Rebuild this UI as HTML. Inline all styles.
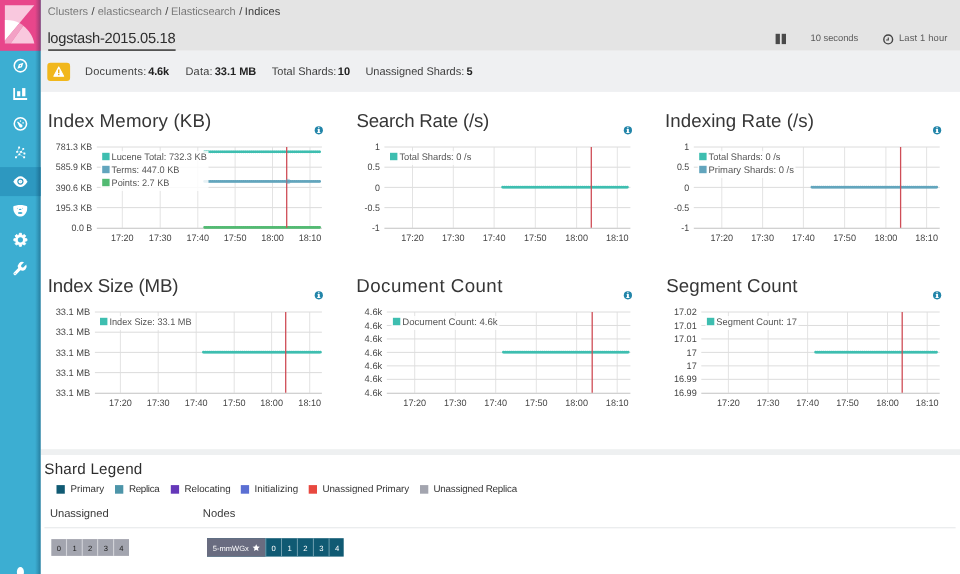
<!DOCTYPE html>
<html lang="en">
<head>
<meta charset="utf-8">
<title>Monitoring - Kibana</title>
<style>
html,body{margin:0;padding:0;}
body{text-rendering:geometricPrecision;width:960px;height:574px;overflow:hidden;background:#fff;position:relative;font-family:"Liberation Sans", sans-serif;color:#444;}
.abs{position:absolute;}
.t{position:absolute;white-space:nowrap;line-height:1.2;font-family:"Liberation Sans", sans-serif;}
#page{position:absolute;left:0;top:0;width:960px;height:574px;will-change:transform;}
#bg{position:absolute;left:0;top:0;}
.chart{position:absolute;overflow:visible;}
.chart text{font-family:"Liberation Sans", sans-serif;text-rendering:geometricPrecision;}
.ax{font-size:9.3px;fill:#454545;}
.lg{font-size:9.5px;fill:#555;}
#nav{position:absolute;left:0;top:0;width:41px;height:574px;}
.ub{position:absolute;top:539px;height:17px;width:15.2px;color:#222;font-size:7.6px;line-height:19.6px;text-align:center;}
.nb{position:absolute;top:538px;height:18px;width:15.9px;color:#fff;font-size:7.7px;line-height:22.8px;text-align:center;}
</style>
</head>
<body>
<div id="page">

<svg id="bg" width="960" height="574" viewBox="0 0 960 574">
<defs><linearGradient id="shade" x1="0" x2="1" y1="0" y2="0"><stop offset="0" stop-color="#002846" stop-opacity="0"/><stop offset="0.4" stop-color="#002846" stop-opacity="0.13"/><stop offset="1" stop-color="#002846" stop-opacity="0.36"/></linearGradient></defs>
<rect x="40.65" y="0" width="919.35" height="50.75" fill="#e4e4e4"/>
<rect x="40.65" y="50.75" width="919.35" height="41.15" fill="#eff0f2"/>
<rect x="40.65" y="449.2" width="919.35" height="5.8" fill="#eef0f1"/>
<rect x="0" y="0" width="40.65" height="574" fill="#3caed2"/>
<rect x="0" y="0" width="40.65" height="50.8" fill="#e8468b"/>
<rect x="0" y="167.1" width="40.65" height="29.0" fill="#2d98c0"/>
<rect x="48.2" y="49.35" width="127.4" height="1.45" fill="#303030"/>
<rect x="47.3" y="62.7" width="22.8" height="18.2" fill="#f1b71c" rx="3.2"/>
<path d="M58.75 66.95L63.65 76.2H53.85Z" fill="#fff" stroke="#fff" stroke-width="1.1" stroke-linejoin="round"/><rect x="58.05" y="69.5" width="1.4" height="3.7" fill="#e9ad17"/><rect x="58.05" y="73.9" width="1.4" height="1.3" fill="#e9ad17"/>
<rect x="44.4" y="527.2" width="911.2" height="1.1" fill="#e6e9ea"/>
<rect x="56.5" y="485.1" width="8.3" height="8.6" fill="#105a73"/>
<rect x="115.0" y="485.1" width="8.3" height="8.6" fill="#4d95a9"/>
<rect x="170.8" y="485.1" width="8.3" height="8.6" fill="#6538b9"/>
<rect x="240.8" y="485.1" width="8.3" height="8.6" fill="#5b6fd3"/>
<rect x="308.7" y="485.1" width="8.3" height="8.6" fill="#e8483f"/>
<rect x="420.0" y="485.1" width="8.3" height="8.6" fill="#a3a5af"/>
<rect x="51.3" y="539.1" width="77.7" height="16.8" fill="#a3a5af"/>
<rect x="65.95" y="539.1" width="1.1" height="16.8" fill="#d3d4da"/>
<rect x="81.7" y="539.1" width="1.1" height="16.8" fill="#d3d4da"/>
<rect x="97.05" y="539.1" width="1.1" height="16.8" fill="#d3d4da"/>
<rect x="113.05" y="539.1" width="1.1" height="16.8" fill="#d3d4da"/>
<rect x="207.0" y="538.2" width="136.7" height="18.4" fill="#105a73"/>
<rect x="207.0" y="538.2" width="58.3" height="18.4" fill="#696c80"/>
<rect x="265.3" y="538.2" width="0.95" height="18.4" fill="#74a2b2"/>
<rect x="281.0" y="538.2" width="0.95" height="18.4" fill="#74a2b2"/>
<rect x="296.9" y="538.2" width="0.95" height="18.4" fill="#74a2b2"/>
<rect x="312.9" y="538.2" width="0.95" height="18.4" fill="#74a2b2"/>
<rect x="328.6" y="538.2" width="0.95" height="18.4" fill="#74a2b2"/>
<rect x="35.05" y="0" width="5.6" height="574" fill="url(#shade)"/>
</svg>
<div id="nav">
<svg width="41" height="51" viewBox="0 0 41 51" style="position:absolute;left:0;top:0"><path d="M4.9 5.2H34.3L4.9 40.5Z" fill="#f9c8de"/><path d="M4.9 19.9C10.5 19.7 15.6 20.8 19.5 23.0L4.9 40.5Z" fill="#fff"/><path d="M4.9 40.5L19.5 23.0C21.0 23.8 22.2 24.7 23.3 25.7L10.6 43.5H4.9Z" fill="#f3a1c5"/><path d="M10.6 43.5L23.3 25.7C29.0 30.2 33.2 36.5 34.3 43.5Z" fill="#f9c8de"/></svg>
<svg class="abs" style="left:10px;top:55px" width="21" height="21" viewBox="-10.400 -10.700 21 21"><circle r="6.15" fill="none" stroke="#fff" stroke-width="1.55"/><path d="M3.0 -2.95L1.5 1.55L-3.05 3.0L-1.5 -1.5Z" fill="#fff"/><circle r="0.62" fill="#3caed2"/></svg>
<svg class="abs" style="left:10px;top:84px" width="21" height="21" viewBox="-10.400 -10.000 21 21"><path d="M-7.15 -6.1h1.8v10.2h12.1v1.8h-13.9z" fill="#fff"/><rect x="-3.3" y="-2.8" width="3.2" height="5.1" fill="#fff"/><rect x="1.7" y="-5.9" width="3.3" height="8.2" fill="#fff"/></svg>
<svg class="abs" style="left:10px;top:113px" width="21" height="21" viewBox="-10.400 -10.800 21 21"><circle r="6.15" fill="none" stroke="#fff" stroke-width="1.55"/><path d="M-3.35 -1.75L-2.45 -2.35L0.75 0.35A1.7 1.7 0 1 1 -1.25 2.35Z" fill="#fff"/><circle cx="0.1" cy="-2.7" r="0.78" fill="#fff" fill-opacity=".9"/><circle cx="2.7" cy="-0.9" r="0.78" fill="#fff" fill-opacity=".9"/></svg>
<svg class="abs" style="left:10px;top:142px" width="21" height="21" viewBox="-10.250 -10.300 21 21"><path d="M-1.15 -4.75L-3.20 -0.45" stroke="#fff" stroke-width="0.55" stroke-opacity=".8"/><path d="M3.00 -3.45L0.80 -0.45" stroke="#fff" stroke-width="0.55" stroke-opacity=".8"/><path d="M-3.20 -0.45L0.80 -0.45" stroke="#fff" stroke-width="0.55" stroke-opacity=".8"/><path d="M0.80 -0.45L4.20 1.15" stroke="#fff" stroke-width="0.55" stroke-opacity=".8"/><path d="M0.80 -0.45L-0.90 2.05" stroke="#fff" stroke-width="0.55" stroke-opacity=".8"/><path d="M-0.90 2.05L-4.30 4.95" stroke="#fff" stroke-width="0.55" stroke-opacity=".8"/><path d="M-0.90 2.05L3.90 4.95" stroke="#fff" stroke-width="0.55" stroke-opacity=".8"/><rect x="-2.10" y="-5.70" width="1.9" height="1.9" rx="0.5" fill="#fff"/><rect x="2.05" y="-4.40" width="1.9" height="1.9" rx="0.5" fill="#fff"/><rect x="-4.15" y="-1.40" width="1.9" height="1.9" rx="0.5" fill="#fff"/><rect x="-0.15" y="-1.40" width="1.9" height="1.9" rx="0.5" fill="#fff"/><rect x="3.25" y="0.20" width="1.9" height="1.9" rx="0.5" fill="#fff"/><rect x="-1.85" y="1.10" width="1.9" height="1.9" rx="0.5" fill="#fff"/><rect x="-5.25" y="4.00" width="1.9" height="1.9" rx="0.5" fill="#fff"/><rect x="2.95" y="4.00" width="1.9" height="1.9" rx="0.5" fill="#fff"/></svg>
<svg class="abs" style="left:10px;top:171px" width="21" height="21" viewBox="-10.400 -10.700 21 21"><path d="M-7.15 0C-5.0 -3.4 -2.4 -5.35 0 -5.35C2.4 -5.35 5.0 -3.4 7.15 0C5.0 3.4 2.4 5.35 0 5.35C-2.4 5.35 -5.0 3.4 -7.15 0Z" fill="#fff"/><circle cx="0" cy="-0.1" r="3.1" fill="#2d98c0"/><circle cx="0" cy="-0.1" r="1.9" fill="#fff"/><path d="M-0.1 -1.0v1.1h0.9" stroke="#2d98c0" stroke-width="0.45" stroke-opacity=".55" fill="none"/></svg>
<svg class="abs" style="left:10px;top:200px" width="21" height="21" viewBox="-10.250 -10.700 21 21"><path d="M-6.98 -3.2C-7.0 -4.2 -6.9 -4.6 -6.3 -4.75C-5.5 -4.95 -4.8 -5.0 -4.0 -5.25C-2.6 -5.7 -1.3 -5.8 0 -5.8C1.3 -5.8 2.6 -5.7 4.0 -5.25C4.8 -5.0 5.5 -4.95 6.3 -4.75C6.9 -4.6 7.0 -4.2 6.98 -3.2C6.95 -1.8 6.9 -0.6 6.5 0.6C6.0 2.2 5.2 3.4 4.1 4.3C2.9 5.3 1.4 5.8 0 5.8C-1.4 5.8 -2.9 5.3 -4.1 4.3C-5.2 3.4 -6.0 2.2 -6.5 0.6C-6.9 -0.6 -6.95 -1.8 -6.98 -3.2Z" fill="#fff"/><circle cx="-2.8" cy="-2.35" r="0.5" fill="#3caed2" fill-opacity=".6"/><circle cx="2.3" cy="-2.35" r="0.5" fill="#3caed2" fill-opacity=".6"/><ellipse cx="-0.08" cy="-1.3" rx="1.3" ry="0.65" fill="#3caed2"/><ellipse cx="-0.08" cy="2.35" rx="2.35" ry="1.05" fill="#3caed2"/></svg>
<svg class="abs" style="left:10px;top:229px" width="21" height="21" viewBox="-10.400 -10.800 21 21"><path d="M-1.31 -4.72L-0.99 -6.53L0.99 -6.53L1.31 -4.72L2.42 -4.26L3.92 -5.31L5.31 -3.92L4.26 -2.42L4.72 -1.31L6.53 -0.99L6.53 0.99L4.72 1.31L4.26 2.42L5.31 3.92L3.92 5.31L2.42 4.26L1.31 4.72L0.99 6.53L-0.99 6.53L-1.31 4.72L-2.42 4.26L-3.92 5.31L-5.31 3.92L-4.26 2.42L-4.72 1.31L-6.53 0.99L-6.53 -0.99L-4.72 -1.31L-4.26 -2.42L-5.31 -3.92L-3.92 -5.31L-2.42 -4.26Z" fill="#fff" stroke="#fff" stroke-width="0.9" stroke-linejoin="round"/><circle r="2.6" fill="#3caed2"/></svg>
<svg class="abs" style="left:10px;top:258px" width="21" height="21" viewBox="-10.250 -10.600 21 21"><g transform="translate(2.0 -2.3) rotate(45)"><path d="M-1.55 10.3V4.12A4.4 4.4 0 0 1 -1.6 -4.1V-0.6A1.6 1.6 0 0 0 1.6 -0.6V-4.1A4.4 4.4 0 0 1 1.55 4.12V10.3A1.55 1.55 0 0 1 -1.55 10.3Z" fill="#fff"/><circle cx="0" cy="10.1" r="0.7" fill="#3caed2" fill-opacity=".5"/></g></svg>
<svg class="abs" style="left:10px;top:560px" width="20" height="14" viewBox="10 560 20 14"><ellipse cx="20.4" cy="572.0" rx="3.55" ry="5.0" fill="#fff"/></svg>
</div>
<span id="t1" class="t " style="left:47.85px;top:5.86px;font-size:11px;color:#7a7a7a;letter-spacing:-0.020px;">Clusters</span>
<span id="t2" class="t " style="left:91.50px;top:5.86px;font-size:11px;color:#444;">/</span>
<span id="t3" class="t " style="left:97.75px;top:5.86px;font-size:11px;color:#7a7a7a;letter-spacing:-0.006px;">elasticsearch</span>
<span id="t4" class="t " style="left:165.30px;top:5.86px;font-size:11px;color:#444;">/</span>
<span id="t5" class="t " style="left:171.10px;top:5.86px;font-size:11px;color:#7a7a7a;letter-spacing:-0.071px;">Elasticsearch</span>
<span id="t6" class="t " style="left:239.20px;top:5.86px;font-size:11px;color:#444;">/</span>
<span id="t7" class="t " style="left:244.80px;top:5.86px;font-size:11px;color:#3a3a3a;letter-spacing:0.116px;">Indices</span>
<span id="t8" class="t " style="left:47.38px;top:30.92px;font-size:14.7px;color:#2d2d2d;letter-spacing:-0.267px;">logstash-2015.05.18</span>
<svg class="abs" style="left:774px;top:32px" width="13" height="13" viewBox="-6.800 -6.950 13 13"><rect x="-5.2" y="-5.15" width="4.3" height="10.3" fill="#4a4a4a"/><rect x="0.9" y="-5.15" width="4.3" height="10.3" fill="#4a4a4a"/></svg>
<span id="t9" class="t " style="left:810.60px;top:32.05px;font-size:9.4px;color:#5a5a5a;letter-spacing:-0.042px;">10 seconds</span>
<svg class="abs" style="left:882px;top:33px" width="13" height="13" viewBox="-6.200 -6.450 13 13"><circle r="4.4" fill="none" stroke="#444" stroke-width="1.4"/><path d="M0.1 -2.05V0.5H-2.1" fill="none" stroke="#444" stroke-width="1.15" stroke-linejoin="miter"/></svg>
<span id="t10" class="t " style="left:898.95px;top:32.05px;font-size:9.4px;color:#5a5a5a;letter-spacing:0.155px;">Last 1 hour</span>
<span id="t11" class="t " style="left:84.90px;top:66.06px;font-size:11.0px;color:#3f3f3f;letter-spacing:0.296px;">Documents:</span>
<span id="t12" class="t " style="left:148.15px;top:66.06px;font-size:11.0px;color:#222;font-weight:bold;letter-spacing:-0.131px;">4.6k</span>
<span id="t13" class="t " style="left:185.40px;top:66.06px;font-size:11.0px;color:#3f3f3f;letter-spacing:0.241px;">Data:</span>
<span id="t14" class="t " style="left:214.75px;top:66.06px;font-size:11.0px;color:#222;font-weight:bold;letter-spacing:-0.005px;">33.1 MB</span>
<span id="t15" class="t " style="left:271.80px;top:66.06px;font-size:11.0px;color:#3f3f3f;letter-spacing:0.021px;">Total Shards:</span>
<span id="t16" class="t " style="left:337.85px;top:66.06px;font-size:11.0px;color:#222;font-weight:bold;">10</span>
<span id="t17" class="t " style="left:365.40px;top:66.06px;font-size:11.0px;color:#3f3f3f;letter-spacing:-0.012px;">Unassigned Shards:</span>
<span id="t18" class="t " style="left:466.40px;top:66.06px;font-size:11.0px;color:#222;font-weight:bold;">5</span>
<span id="t19" class="t " style="left:47.74px;top:110.10px;font-size:18.7px;color:#363636;letter-spacing:0.160px;">Index Memory (KB)</span>
<span id="t20" class="t " style="left:356.42px;top:110.10px;font-size:18.7px;color:#363636;letter-spacing:-0.213px;">Search Rate (/s)</span>
<span id="t21" class="t " style="left:665.04px;top:110.10px;font-size:18.7px;color:#363636;letter-spacing:0.079px;">Indexing Rate (/s)</span>
<span id="t22" class="t " style="left:47.74px;top:275.10px;font-size:18.7px;color:#363636;letter-spacing:-0.156px;">Index Size (MB)</span>
<span id="t23" class="t " style="left:356.34px;top:275.10px;font-size:18.7px;color:#363636;letter-spacing:0.444px;">Document Count</span>
<span id="t24" class="t " style="left:666.32px;top:275.10px;font-size:18.7px;color:#363636;letter-spacing:0.098px;">Segment Count</span>
<svg class="abs" style="left:313px;top:125px" width="11" height="11" viewBox="-5.800 -5.300 11 11"><circle r="4.1" fill="#2285a9"/><circle cx="-0.05" cy="-2.6" r="0.8" fill="#fff" fill-opacity=".85"/><path d="M-1.3 -1.3H0.95V1.75H1.55V2.6H-1.55V1.75H-0.95V-0.45H-1.3Z" fill="#fff"/></svg>
<svg class="abs" style="left:313px;top:290px" width="11" height="11" viewBox="-5.800 -5.300 11 11"><circle r="4.1" fill="#2285a9"/><circle cx="-0.05" cy="-2.6" r="0.8" fill="#fff" fill-opacity=".85"/><path d="M-1.3 -1.3H0.95V1.75H1.55V2.6H-1.55V1.75H-0.95V-0.45H-1.3Z" fill="#fff"/></svg>
<svg class="abs" style="left:622px;top:125px" width="11" height="11" viewBox="-5.900 -5.300 11 11"><circle r="4.1" fill="#2285a9"/><circle cx="-0.05" cy="-2.6" r="0.8" fill="#fff" fill-opacity=".85"/><path d="M-1.3 -1.3H0.95V1.75H1.55V2.6H-1.55V1.75H-0.95V-0.45H-1.3Z" fill="#fff"/></svg>
<svg class="abs" style="left:622px;top:290px" width="11" height="11" viewBox="-5.900 -5.300 11 11"><circle r="4.1" fill="#2285a9"/><circle cx="-0.05" cy="-2.6" r="0.8" fill="#fff" fill-opacity=".85"/><path d="M-1.3 -1.3H0.95V1.75H1.55V2.6H-1.55V1.75H-0.95V-0.45H-1.3Z" fill="#fff"/></svg>
<svg class="abs" style="left:932px;top:125px" width="11" height="11" viewBox="-5.100 -5.300 11 11"><circle r="4.1" fill="#2285a9"/><circle cx="-0.05" cy="-2.6" r="0.8" fill="#fff" fill-opacity=".85"/><path d="M-1.3 -1.3H0.95V1.75H1.55V2.6H-1.55V1.75H-0.95V-0.45H-1.3Z" fill="#fff"/></svg>
<svg class="abs" style="left:932px;top:290px" width="11" height="11" viewBox="-5.100 -5.300 11 11"><circle r="4.1" fill="#2285a9"/><circle cx="-0.05" cy="-2.6" r="0.8" fill="#fff" fill-opacity=".85"/><path d="M-1.3 -1.3H0.95V1.75H1.55V2.6H-1.55V1.75H-0.95V-0.45H-1.3Z" fill="#fff"/></svg>
<svg class="chart" style="left:44px;top:140px" width="290" height="110" viewBox="44 140 290 110">
<line x1="96.8" y1="147.00" x2="321.9" y2="147.00" stroke="#c9c9c9" stroke-width="0.65"/>
<text transform="translate(92.20 150.10) scale(0.95 1)" text-anchor="end" class="ax">781.3 KB</text>
<line x1="96.8" y1="167.20" x2="321.9" y2="167.20" stroke="#c9c9c9" stroke-width="0.65"/>
<text transform="translate(92.20 170.30) scale(0.95 1)" text-anchor="end" class="ax">585.9 KB</text>
<line x1="96.8" y1="187.40" x2="321.9" y2="187.40" stroke="#c9c9c9" stroke-width="0.65"/>
<text transform="translate(92.20 190.50) scale(0.95 1)" text-anchor="end" class="ax">390.6 KB</text>
<line x1="96.8" y1="207.60" x2="321.9" y2="207.60" stroke="#c9c9c9" stroke-width="0.65"/>
<text transform="translate(92.20 210.70) scale(0.95 1)" text-anchor="end" class="ax">195.3 KB</text>
<text transform="translate(92.20 230.90) scale(0.95 1)" text-anchor="end" class="ax">0.0 B</text>
<line x1="122.30" y1="147.0" x2="122.30" y2="227.8" stroke="#dedede" stroke-width="0.85"/>
<text transform="translate(122.30 240.70) scale(0.975 1)" text-anchor="middle" class="ax">17:20</text>
<line x1="160.20" y1="147.0" x2="160.20" y2="227.8" stroke="#dedede" stroke-width="0.85"/>
<text transform="translate(160.20 240.70) scale(0.975 1)" text-anchor="middle" class="ax">17:30</text>
<line x1="197.80" y1="147.0" x2="197.80" y2="227.8" stroke="#dedede" stroke-width="0.85"/>
<text transform="translate(197.80 240.70) scale(0.975 1)" text-anchor="middle" class="ax">17:40</text>
<line x1="235.10" y1="147.0" x2="235.10" y2="227.8" stroke="#dedede" stroke-width="0.85"/>
<text transform="translate(235.10 240.70) scale(0.975 1)" text-anchor="middle" class="ax">17:50</text>
<line x1="272.50" y1="147.0" x2="272.50" y2="227.8" stroke="#dedede" stroke-width="0.85"/>
<text transform="translate(272.50 240.70) scale(0.975 1)" text-anchor="middle" class="ax">18:00</text>
<line x1="310.00" y1="147.0" x2="310.00" y2="227.8" stroke="#dedede" stroke-width="0.85"/>
<text transform="translate(310.00 240.70) scale(0.975 1)" text-anchor="middle" class="ax">18:10</text>
<line x1="96.8" y1="228.30" x2="321.9" y2="228.30" stroke="#c2c2c2" stroke-width="1.05"/>
<line x1="204.6" y1="151.8" x2="320.0" y2="151.8" stroke="#3ebeb0" stroke-width="1.9"/>
<line x1="204.6" y1="151.8" x2="320.5" y2="151.8" stroke="#3ebeb0" stroke-width="2.75" stroke-linecap="round" stroke-dasharray="0 1.95"/>
<line x1="204.6" y1="181.4" x2="320.0" y2="181.4" stroke="#62a5bd" stroke-width="1.9"/>
<line x1="204.6" y1="181.4" x2="320.5" y2="181.4" stroke="#62a5bd" stroke-width="2.75" stroke-linecap="round" stroke-dasharray="0 1.95"/>
<line x1="204.6" y1="227.3" x2="320.0" y2="227.3" stroke="#52ba72" stroke-width="1.9"/>
<line x1="204.6" y1="227.3" x2="320.5" y2="227.3" stroke="#52ba72" stroke-width="2.75" stroke-linecap="round" stroke-dasharray="0 1.95"/>
<line x1="286.7" y1="147.0" x2="286.7" y2="227.8" stroke="#cf4d57" stroke-width="1.3"/>
<circle cx="288.0" cy="181.4" r="2.6" fill="#62a5bd" fill-opacity=".45"/>
<rect x="100.70" y="151.00" width="107.80" height="40.00" fill="#fff" fill-opacity="0.85"/>
<rect x="102.20" y="152.80" width="7.4" height="7.4" fill="#3ebeb0"/>
<text x="111.60" y="160.20" class="lg" textLength="95.3" lengthAdjust="spacingAndGlyphs">Lucene Total: 732.3 KB</text>
<rect x="102.20" y="165.80" width="7.4" height="7.4" fill="#62a5bd"/>
<text x="111.60" y="173.20" class="lg" textLength="67.8" lengthAdjust="spacingAndGlyphs">Terms: 447.0 KB</text>
<rect x="102.20" y="178.80" width="7.4" height="7.4" fill="#52ba72"/>
<text x="111.60" y="186.20" class="lg" textLength="57.8" lengthAdjust="spacingAndGlyphs">Points: 2.7 KB</text>
</svg>
<svg class="chart" style="left:352px;top:140px" width="290" height="110" viewBox="352 140 290 110">
<line x1="384.4" y1="147.00" x2="630.4" y2="147.00" stroke="#c9c9c9" stroke-width="0.65"/>
<text transform="translate(379.80 150.10) scale(0.95 1)" text-anchor="end" class="ax">1</text>
<line x1="384.4" y1="167.20" x2="630.4" y2="167.20" stroke="#c9c9c9" stroke-width="0.65"/>
<text transform="translate(379.80 170.30) scale(0.95 1)" text-anchor="end" class="ax">0.5</text>
<line x1="384.4" y1="187.40" x2="630.4" y2="187.40" stroke="#c9c9c9" stroke-width="0.65"/>
<text transform="translate(379.80 190.50) scale(0.95 1)" text-anchor="end" class="ax">0</text>
<line x1="384.4" y1="207.60" x2="630.4" y2="207.60" stroke="#c9c9c9" stroke-width="0.65"/>
<text transform="translate(379.80 210.70) scale(0.95 1)" text-anchor="end" class="ax">-0.5</text>
<text transform="translate(379.80 230.90) scale(0.95 1)" text-anchor="end" class="ax">-1</text>
<line x1="412.50" y1="147.0" x2="412.50" y2="227.8" stroke="#dedede" stroke-width="0.85"/>
<text transform="translate(412.50 240.70) scale(0.975 1)" text-anchor="middle" class="ax">17:20</text>
<line x1="453.30" y1="147.0" x2="453.30" y2="227.8" stroke="#dedede" stroke-width="0.85"/>
<text transform="translate(453.30 240.70) scale(0.975 1)" text-anchor="middle" class="ax">17:30</text>
<line x1="494.10" y1="147.0" x2="494.10" y2="227.8" stroke="#dedede" stroke-width="0.85"/>
<text transform="translate(494.10 240.70) scale(0.975 1)" text-anchor="middle" class="ax">17:40</text>
<line x1="535.30" y1="147.0" x2="535.30" y2="227.8" stroke="#dedede" stroke-width="0.85"/>
<text transform="translate(535.30 240.70) scale(0.975 1)" text-anchor="middle" class="ax">17:50</text>
<line x1="576.60" y1="147.0" x2="576.60" y2="227.8" stroke="#dedede" stroke-width="0.85"/>
<text transform="translate(576.60 240.70) scale(0.975 1)" text-anchor="middle" class="ax">18:00</text>
<line x1="617.30" y1="147.0" x2="617.30" y2="227.8" stroke="#dedede" stroke-width="0.85"/>
<text transform="translate(617.30 240.70) scale(0.975 1)" text-anchor="middle" class="ax">18:10</text>
<line x1="384.4" y1="228.30" x2="630.4" y2="228.30" stroke="#c2c2c2" stroke-width="1.05"/>
<line x1="502.6" y1="187.2" x2="627.6" y2="187.2" stroke="#3ebeb0" stroke-width="1.9"/>
<line x1="502.6" y1="187.2" x2="628.1" y2="187.2" stroke="#3ebeb0" stroke-width="2.75" stroke-linecap="round" stroke-dasharray="0 1.95"/>
<line x1="591.3" y1="147.0" x2="591.3" y2="227.8" stroke="#cf4d57" stroke-width="1.3"/>

<rect x="388.50" y="151.00" width="84.40" height="14.00" fill="#fff" fill-opacity="0.85"/>
<rect x="390.00" y="152.80" width="7.4" height="7.4" fill="#3ebeb0"/>
<text x="399.40" y="160.20" class="lg" textLength="71.9" lengthAdjust="spacingAndGlyphs">Total Shards: 0 /s</text>
</svg>
<svg class="chart" style="left:661px;top:140px" width="290" height="110" viewBox="661 140 290 110">
<line x1="693.8" y1="147.00" x2="939.7" y2="147.00" stroke="#c9c9c9" stroke-width="0.65"/>
<text transform="translate(689.20 150.10) scale(0.95 1)" text-anchor="end" class="ax">1</text>
<line x1="693.8" y1="167.20" x2="939.7" y2="167.20" stroke="#c9c9c9" stroke-width="0.65"/>
<text transform="translate(689.20 170.30) scale(0.95 1)" text-anchor="end" class="ax">0.5</text>
<line x1="693.8" y1="187.40" x2="939.7" y2="187.40" stroke="#c9c9c9" stroke-width="0.65"/>
<text transform="translate(689.20 190.50) scale(0.95 1)" text-anchor="end" class="ax">0</text>
<line x1="693.8" y1="207.60" x2="939.7" y2="207.60" stroke="#c9c9c9" stroke-width="0.65"/>
<text transform="translate(689.20 210.70) scale(0.95 1)" text-anchor="end" class="ax">-0.5</text>
<text transform="translate(689.20 230.90) scale(0.95 1)" text-anchor="end" class="ax">-1</text>
<line x1="721.80" y1="147.0" x2="721.80" y2="227.8" stroke="#dedede" stroke-width="0.85"/>
<text transform="translate(721.80 240.70) scale(0.975 1)" text-anchor="middle" class="ax">17:20</text>
<line x1="762.60" y1="147.0" x2="762.60" y2="227.8" stroke="#dedede" stroke-width="0.85"/>
<text transform="translate(762.60 240.70) scale(0.975 1)" text-anchor="middle" class="ax">17:30</text>
<line x1="803.40" y1="147.0" x2="803.40" y2="227.8" stroke="#dedede" stroke-width="0.85"/>
<text transform="translate(803.40 240.70) scale(0.975 1)" text-anchor="middle" class="ax">17:40</text>
<line x1="844.60" y1="147.0" x2="844.60" y2="227.8" stroke="#dedede" stroke-width="0.85"/>
<text transform="translate(844.60 240.70) scale(0.975 1)" text-anchor="middle" class="ax">17:50</text>
<line x1="885.90" y1="147.0" x2="885.90" y2="227.8" stroke="#dedede" stroke-width="0.85"/>
<text transform="translate(885.90 240.70) scale(0.975 1)" text-anchor="middle" class="ax">18:00</text>
<line x1="926.60" y1="147.0" x2="926.60" y2="227.8" stroke="#dedede" stroke-width="0.85"/>
<text transform="translate(926.60 240.70) scale(0.975 1)" text-anchor="middle" class="ax">18:10</text>
<line x1="693.8" y1="228.30" x2="939.7" y2="228.30" stroke="#c2c2c2" stroke-width="1.05"/>
<line x1="811.9" y1="187.2" x2="936.9" y2="187.2" stroke="#62a5bd" stroke-width="1.9"/>
<line x1="811.9" y1="187.2" x2="937.4" y2="187.2" stroke="#62a5bd" stroke-width="2.75" stroke-linecap="round" stroke-dasharray="0 1.95"/>
<line x1="900.6" y1="147.0" x2="900.6" y2="227.8" stroke="#cf4d57" stroke-width="1.3"/>

<rect x="697.70" y="151.00" width="97.80" height="27.00" fill="#fff" fill-opacity="0.85"/>
<rect x="699.20" y="152.80" width="7.4" height="7.4" fill="#3ebeb0"/>
<text x="708.60" y="160.20" class="lg" textLength="71.9" lengthAdjust="spacingAndGlyphs">Total Shards: 0 /s</text>
<rect x="699.20" y="165.80" width="7.4" height="7.4" fill="#62a5bd"/>
<text x="708.60" y="173.20" class="lg" textLength="85.3" lengthAdjust="spacingAndGlyphs">Primary Shards: 0 /s</text>
</svg>
<svg class="chart" style="left:44px;top:305px" width="290" height="110" viewBox="44 305 290 110">
<line x1="94.9" y1="312.00" x2="321.9" y2="312.00" stroke="#c9c9c9" stroke-width="0.65"/>
<text transform="translate(90.30 315.10) scale(1.0 1)" text-anchor="end" class="ax">33.1 MB</text>
<line x1="94.9" y1="332.20" x2="321.9" y2="332.20" stroke="#c9c9c9" stroke-width="0.65"/>
<text transform="translate(90.30 335.30) scale(1.0 1)" text-anchor="end" class="ax">33.1 MB</text>
<line x1="94.9" y1="352.40" x2="321.9" y2="352.40" stroke="#c9c9c9" stroke-width="0.65"/>
<text transform="translate(90.30 355.50) scale(1.0 1)" text-anchor="end" class="ax">33.1 MB</text>
<line x1="94.9" y1="372.60" x2="321.9" y2="372.60" stroke="#c9c9c9" stroke-width="0.65"/>
<text transform="translate(90.30 375.70) scale(1.0 1)" text-anchor="end" class="ax">33.1 MB</text>
<text transform="translate(90.30 395.90) scale(1.0 1)" text-anchor="end" class="ax">33.1 MB</text>
<line x1="120.40" y1="312.0" x2="120.40" y2="392.8" stroke="#dedede" stroke-width="0.85"/>
<text transform="translate(120.40 405.70) scale(0.975 1)" text-anchor="middle" class="ax">17:20</text>
<line x1="158.20" y1="312.0" x2="158.20" y2="392.8" stroke="#dedede" stroke-width="0.85"/>
<text transform="translate(158.20 405.70) scale(0.975 1)" text-anchor="middle" class="ax">17:30</text>
<line x1="196.20" y1="312.0" x2="196.20" y2="392.8" stroke="#dedede" stroke-width="0.85"/>
<text transform="translate(196.20 405.70) scale(0.975 1)" text-anchor="middle" class="ax">17:40</text>
<line x1="234.20" y1="312.0" x2="234.20" y2="392.8" stroke="#dedede" stroke-width="0.85"/>
<text transform="translate(234.20 405.70) scale(0.975 1)" text-anchor="middle" class="ax">17:50</text>
<line x1="271.60" y1="312.0" x2="271.60" y2="392.8" stroke="#dedede" stroke-width="0.85"/>
<text transform="translate(271.60 405.70) scale(0.975 1)" text-anchor="middle" class="ax">18:00</text>
<line x1="309.70" y1="312.0" x2="309.70" y2="392.8" stroke="#dedede" stroke-width="0.85"/>
<text transform="translate(309.70 405.70) scale(0.975 1)" text-anchor="middle" class="ax">18:10</text>
<line x1="94.9" y1="393.30" x2="321.9" y2="393.30" stroke="#c2c2c2" stroke-width="1.05"/>
<line x1="203.4" y1="352.2" x2="320.0" y2="352.2" stroke="#3ebeb0" stroke-width="1.9"/>
<line x1="203.4" y1="352.2" x2="320.5" y2="352.2" stroke="#3ebeb0" stroke-width="2.75" stroke-linecap="round" stroke-dasharray="0 1.95"/>
<line x1="285.7" y1="312.0" x2="285.7" y2="392.8" stroke="#cf4d57" stroke-width="1.3"/>

<rect x="98.50" y="316.00" width="94.70" height="14.00" fill="#fff" fill-opacity="0.85"/>
<rect x="100.00" y="317.80" width="7.4" height="7.4" fill="#3ebeb0"/>
<text x="109.40" y="325.20" class="lg" textLength="82.2" lengthAdjust="spacingAndGlyphs">Index Size: 33.1 MB</text>
</svg>
<svg class="chart" style="left:352px;top:305px" width="290" height="110" viewBox="352 305 290 110">
<line x1="386.8" y1="312.00" x2="630.4" y2="312.00" stroke="#c9c9c9" stroke-width="0.65"/>
<text transform="translate(382.20 315.10) scale(1.0 1)" text-anchor="end" class="ax">4.6k</text>
<line x1="386.8" y1="325.47" x2="630.4" y2="325.47" stroke="#c9c9c9" stroke-width="0.65"/>
<text transform="translate(382.20 328.57) scale(1.0 1)" text-anchor="end" class="ax">4.6k</text>
<line x1="386.8" y1="338.93" x2="630.4" y2="338.93" stroke="#c9c9c9" stroke-width="0.65"/>
<text transform="translate(382.20 342.03) scale(1.0 1)" text-anchor="end" class="ax">4.6k</text>
<line x1="386.8" y1="352.40" x2="630.4" y2="352.40" stroke="#c9c9c9" stroke-width="0.65"/>
<text transform="translate(382.20 355.50) scale(1.0 1)" text-anchor="end" class="ax">4.6k</text>
<line x1="386.8" y1="365.87" x2="630.4" y2="365.87" stroke="#c9c9c9" stroke-width="0.65"/>
<text transform="translate(382.20 368.97) scale(1.0 1)" text-anchor="end" class="ax">4.6k</text>
<line x1="386.8" y1="379.33" x2="630.4" y2="379.33" stroke="#c9c9c9" stroke-width="0.65"/>
<text transform="translate(382.20 382.43) scale(1.0 1)" text-anchor="end" class="ax">4.6k</text>
<text transform="translate(382.20 395.90) scale(1.0 1)" text-anchor="end" class="ax">4.6k</text>
<line x1="414.70" y1="312.0" x2="414.70" y2="392.8" stroke="#dedede" stroke-width="0.85"/>
<text transform="translate(414.70 405.70) scale(0.975 1)" text-anchor="middle" class="ax">17:20</text>
<line x1="455.30" y1="312.0" x2="455.30" y2="392.8" stroke="#dedede" stroke-width="0.85"/>
<text transform="translate(455.30 405.70) scale(0.975 1)" text-anchor="middle" class="ax">17:30</text>
<line x1="495.70" y1="312.0" x2="495.70" y2="392.8" stroke="#dedede" stroke-width="0.85"/>
<text transform="translate(495.70 405.70) scale(0.975 1)" text-anchor="middle" class="ax">17:40</text>
<line x1="536.30" y1="312.0" x2="536.30" y2="392.8" stroke="#dedede" stroke-width="0.85"/>
<text transform="translate(536.30 405.70) scale(0.975 1)" text-anchor="middle" class="ax">17:50</text>
<line x1="576.60" y1="312.0" x2="576.60" y2="392.8" stroke="#dedede" stroke-width="0.85"/>
<text transform="translate(576.60 405.70) scale(0.975 1)" text-anchor="middle" class="ax">18:00</text>
<line x1="617.20" y1="312.0" x2="617.20" y2="392.8" stroke="#dedede" stroke-width="0.85"/>
<text transform="translate(617.20 405.70) scale(0.975 1)" text-anchor="middle" class="ax">18:10</text>
<line x1="386.8" y1="393.30" x2="630.4" y2="393.30" stroke="#c2c2c2" stroke-width="1.05"/>
<line x1="503.4" y1="352.2" x2="628.0" y2="352.2" stroke="#3ebeb0" stroke-width="1.9"/>
<line x1="503.4" y1="352.2" x2="628.5" y2="352.2" stroke="#3ebeb0" stroke-width="2.75" stroke-linecap="round" stroke-dasharray="0 1.95"/>
<line x1="592.2" y1="312.0" x2="592.2" y2="392.8" stroke="#cf4d57" stroke-width="1.3"/>

<rect x="391.40" y="316.00" width="107.80" height="14.00" fill="#fff" fill-opacity="0.85"/>
<rect x="392.90" y="317.80" width="7.4" height="7.4" fill="#3ebeb0"/>
<text x="402.30" y="325.20" class="lg" textLength="95.3" lengthAdjust="spacingAndGlyphs">Document Count: 4.6k</text>
</svg>
<svg class="chart" style="left:661px;top:305px" width="290" height="110" viewBox="661 305 290 110">
<line x1="701.3" y1="312.00" x2="939.7" y2="312.00" stroke="#c9c9c9" stroke-width="0.65"/>
<text transform="translate(696.70 315.10) scale(0.98 1)" text-anchor="end" class="ax">17.02</text>
<line x1="701.3" y1="325.47" x2="939.7" y2="325.47" stroke="#c9c9c9" stroke-width="0.65"/>
<text transform="translate(696.70 328.57) scale(0.98 1)" text-anchor="end" class="ax">17.01</text>
<line x1="701.3" y1="338.93" x2="939.7" y2="338.93" stroke="#c9c9c9" stroke-width="0.65"/>
<text transform="translate(696.70 342.03) scale(0.98 1)" text-anchor="end" class="ax">17.01</text>
<line x1="701.3" y1="352.40" x2="939.7" y2="352.40" stroke="#c9c9c9" stroke-width="0.65"/>
<text transform="translate(696.70 355.50) scale(0.98 1)" text-anchor="end" class="ax">17</text>
<line x1="701.3" y1="365.87" x2="939.7" y2="365.87" stroke="#c9c9c9" stroke-width="0.65"/>
<text transform="translate(696.70 368.97) scale(0.98 1)" text-anchor="end" class="ax">17</text>
<line x1="701.3" y1="379.33" x2="939.7" y2="379.33" stroke="#c9c9c9" stroke-width="0.65"/>
<text transform="translate(696.70 382.43) scale(0.98 1)" text-anchor="end" class="ax">16.99</text>
<text transform="translate(696.70 395.90) scale(0.98 1)" text-anchor="end" class="ax">16.99</text>
<line x1="728.40" y1="312.0" x2="728.40" y2="392.8" stroke="#dedede" stroke-width="0.85"/>
<text transform="translate(728.40 405.70) scale(0.975 1)" text-anchor="middle" class="ax">17:20</text>
<line x1="768.10" y1="312.0" x2="768.10" y2="392.8" stroke="#dedede" stroke-width="0.85"/>
<text transform="translate(768.10 405.70) scale(0.975 1)" text-anchor="middle" class="ax">17:30</text>
<line x1="807.60" y1="312.0" x2="807.60" y2="392.8" stroke="#dedede" stroke-width="0.85"/>
<text transform="translate(807.60 405.70) scale(0.975 1)" text-anchor="middle" class="ax">17:40</text>
<line x1="847.50" y1="312.0" x2="847.50" y2="392.8" stroke="#dedede" stroke-width="0.85"/>
<text transform="translate(847.50 405.70) scale(0.975 1)" text-anchor="middle" class="ax">17:50</text>
<line x1="887.50" y1="312.0" x2="887.50" y2="392.8" stroke="#dedede" stroke-width="0.85"/>
<text transform="translate(887.50 405.70) scale(0.975 1)" text-anchor="middle" class="ax">18:00</text>
<line x1="927.20" y1="312.0" x2="927.20" y2="392.8" stroke="#dedede" stroke-width="0.85"/>
<text transform="translate(927.20 405.70) scale(0.975 1)" text-anchor="middle" class="ax">18:10</text>
<line x1="701.3" y1="393.30" x2="939.7" y2="393.30" stroke="#c2c2c2" stroke-width="1.05"/>
<line x1="815.6" y1="352.2" x2="937.0" y2="352.2" stroke="#3ebeb0" stroke-width="1.9"/>
<line x1="815.6" y1="352.2" x2="937.5" y2="352.2" stroke="#3ebeb0" stroke-width="2.75" stroke-linecap="round" stroke-dasharray="0 1.95"/>
<line x1="902.2" y1="312.0" x2="902.2" y2="392.8" stroke="#cf4d57" stroke-width="1.3"/>

<rect x="705.40" y="316.00" width="93.10" height="14.00" fill="#fff" fill-opacity="0.85"/>
<rect x="706.90" y="317.80" width="7.4" height="7.4" fill="#3ebeb0"/>
<text x="716.30" y="325.20" class="lg" textLength="80.6" lengthAdjust="spacingAndGlyphs">Segment Count: 17</text>
</svg>
<span id="t25" class="t " style="left:44.32px;top:461.16px;font-size:15.2px;color:#2d2d2d;letter-spacing:0.229px;">Shard Legend</span>
<span id="t26" class="t " style="left:70.40px;top:484.48px;font-size:9.8px;color:#333;letter-spacing:0.008px;">Primary</span>
<span id="t27" class="t " style="left:128.90px;top:484.48px;font-size:9.8px;color:#333;letter-spacing:-0.314px;">Replica</span>
<span id="t28" class="t " style="left:184.50px;top:484.48px;font-size:9.8px;color:#333;letter-spacing:-0.023px;">Relocating</span>
<span id="t29" class="t " style="left:254.60px;top:484.48px;font-size:9.8px;color:#333;letter-spacing:0.042px;">Initializing</span>
<span id="t30" class="t " style="left:322.55px;top:484.48px;font-size:9.8px;color:#333;letter-spacing:-0.099px;">Unassigned Primary</span>
<span id="t31" class="t " style="left:433.45px;top:484.48px;font-size:9.8px;color:#333;letter-spacing:-0.201px;">Unassigned Replica</span>
<span id="t32" class="t " style="left:49.95px;top:508.18px;font-size:11.2px;color:#3a3a3a;letter-spacing:-0.047px;">Unassigned</span>
<span id="t33" class="t " style="left:202.80px;top:508.18px;font-size:11.2px;color:#3a3a3a;letter-spacing:0.056px;">Nodes</span>
<div class="ub" style="left:51.30px">0</div>
<div class="ub" style="left:66.92px">1</div>
<div class="ub" style="left:82.54px">2</div>
<div class="ub" style="left:98.16px">3</div>
<div class="ub" style="left:113.78px">4</div>
<div class="nb" style="left:265.80px">0</div>
<div class="nb" style="left:281.65px">1</div>
<div class="nb" style="left:297.50px">2</div>
<div class="nb" style="left:313.35px">3</div>
<div class="nb" style="left:329.20px">4</div>
<span id="t34" class="t " style="left:212.70px;top:544.37px;font-size:7.55px;color:#fff;letter-spacing:0.018px;">5-mmWGx</span>
<svg class="abs" style="left:252px;top:543px" width="9" height="9" viewBox="-4.200 -4.800 9 9"><path d="M0 -3.6L1.06 -1.2L3.6 -0.95L1.7 0.75L2.25 3.3L0 2.0L-2.25 3.3L-1.7 0.75L-3.6 -0.95L-1.06 -1.2Z" fill="#fff"/></svg>
</div>
</body>
</html>
